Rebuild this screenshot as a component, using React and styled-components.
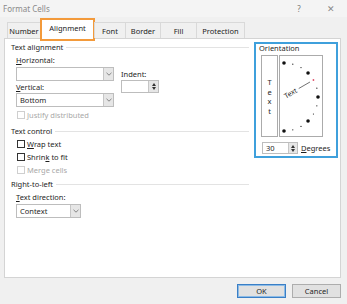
import React from "react";
import styled, { createGlobalStyle } from "styled-components";

const Global = createGlobalStyle`
  html, body { margin: 0; padding: 0; background: #f0f0f0; }
  * { box-sizing: border-box; }
`;

const Dialog = styled.div`
  width: 347px;
  height: 304px;
  background: #f0f0f0;
  display: flex;
  flex-direction: column;
  font-family: "Noto Sans", "Open Sans", sans-serif;
  font-size: 7.5px;
  color: #1e1e1e;
  overflow: hidden;
`;

const TitleBar = styled.div`
  height: 17px;
  display: flex;
  align-items: center;
  padding-left: 3px;
  background: #f4f4f4;
`;

const Title = styled.span`
  color: #8a8a8a;
  font-size: 8px;
  flex: 1;
`;

const TitleButton = styled.span`
  width: ${(p) => p.$w}px;
  margin-right: ${(p) => p.$mr}px;
  text-align: center;
  color: ${(p) => p.$color};
  font-size: ${(p) => p.$size}px;
`;

const TabRow = styled.div`
  height: 21px;
  display: flex;
  align-items: flex-end;
  padding-left: 7px;
  position: relative;
  z-index: 1;
`;

const Tab = styled.div`
  width: ${(p) => p.$w}px;
  height: ${(p) => (p.$active ? 23 : 16)}px;
  margin-bottom: ${(p) => (p.$active ? -3 : 0)}px;
  border: ${(p) => (p.$active ? "2px solid #f39a3b" : "1px solid #d9d9d9")};
  border-bottom: ${(p) => (p.$active ? "2px solid #f39a3b" : "none")};
  margin-left: ${(p) => (p.$first ? 0 : -1)}px;
  background: ${(p) => (p.$active ? "#ffffff" : "#f0f0f0")};
  display: flex;
  align-items: center;
  justify-content: center;
  padding-top: ${(p) => (p.$active ? 0 : 1)}px;
  padding-bottom: ${(p) => (p.$active ? 4 : 0)}px;
  color: #222;
`;

const Panel = styled.div`
  margin-left: 4px;
  width: 337px;
  height: 240px;
  background: #ffffff;
  border: 1px solid #d4d4d4;
  display: flex;
  align-items: flex-start;
`;

const LeftCol = styled.div`
  width: 244px;
  padding: 3px 0 0 6px;
  display: flex;
  flex-direction: column;
`;

const GroupTitle = styled.div`
  display: flex;
  align-items: center;
  gap: 3px;
  height: 10px;
  line-height: 10px;
  margin-top: ${(p) => p.$mt || 0}px;
  white-space: nowrap;
  &::after {
    content: "";
    flex: 1;
    height: 1px;
    background: #e3e3e3;
  }
`;

const FieldLabel = styled.div`
  height: 10px;
  line-height: 10px;
  margin-top: ${(p) => p.$mt || 0}px;
  white-space: nowrap;
`;

const U = styled.span`
  text-decoration: underline;
  text-underline-offset: 1px;
`;

const AlignRow = styled.div`
  display: flex;
  padding-left: 5px;
  margin-top: 3px;
`;

const FieldCol = styled.div`
  width: ${(p) => p.$w}px;
  display: flex;
  flex-direction: column;
  margin-left: ${(p) => p.$ml || 0}px;
  padding-top: ${(p) => p.$pt || 0}px;
`;

const Combo = styled.div`
  width: ${(p) => p.$w}px;
  height: 14px;
  margin-top: ${(p) => p.$mt || 0}px;
  border: 1px solid #bdbdbd;
  background: #fff;
  display: flex;
  align-items: center;
`;

const ComboText = styled.span`
  flex: 1;
  padding-left: 3px;
  line-height: 12px;
`;

const DropButton = styled.span`
  width: 10px;
  height: 100%;
  background: #e6e6e6;
  border-left: 1px solid #c6c6c6;
  display: flex;
  align-items: center;
  justify-content: center;
`;

const Spinner = styled.div`
  width: ${(p) => p.$w}px;
  height: ${(p) => p.$h}px;
  margin-top: ${(p) => p.$mt || 0}px;
  margin-left: ${(p) => p.$ml || 0}px;
  border: 1px solid #bdbdbd;
  background: #fff;
  display: flex;
  align-items: stretch;
  flex: none;
`;

const SpinText = styled.span`
  flex: 1;
  padding-left: 3px;
  display: flex;
  align-items: center;
`;

const SpinButton = styled.span`
  width: ${(p) => p.$w}px;
  background: #e6e6e6;
  border-left: 1px solid #c6c6c6;
  display: flex;
  flex-direction: column;
  align-items: center;
  justify-content: center;
  gap: 1px;
`;

const CheckRow = styled.div`
  display: flex;
  align-items: center;
  gap: 2px;
  height: 10px;
  padding-left: 6px;
  margin-top: ${(p) => p.$mt || 0}px;
  color: ${(p) => (p.$disabled ? "#a8a8a8" : "#1e1e1e")};
  white-space: nowrap;
`;

const Box = styled.span`
  width: 8px;
  height: 8px;
  border: 1px solid ${(p) => (p.$disabled ? "#cfcfcf" : "#333")};
  background: #fff;
  flex: none;
`;

const OrientBox = styled.div`
  margin: 3px 0 0 5px;
  width: 84px;
  height: 116px;
  border: 2px solid #3fa0dc;
  padding-left: 5px;
  display: flex;
  flex-direction: column;
`;

const OrientTitle = styled.div`
  height: 9px;
  line-height: 9px;
  margin-left: -2px;
  white-space: nowrap;
`;

const OrientRow = styled.div`
  display: flex;
  gap: 1px;
  margin-top: 2px;
`;

const StackBox = styled.div`
  width: 17px;
  height: 82px;
  border: 1px solid #ababab;
  display: flex;
  flex-direction: column;
  align-items: center;
  justify-content: center;
  font-size: 7.5px;
  line-height: 9.5px;
  padding-top: 2px;
`;

const DialBox = styled.div`
  width: 44px;
  height: 82px;
  border: 1px solid #ababab;
  display: flex;
`;

const DegRow = styled.div`
  display: flex;
  align-items: center;
  margin-top: 5px;
  gap: 3px;
`;

const Footer = styled.div`
  display: flex;
  justify-content: flex-end;
  gap: 6px;
  padding: 6px 6px 0 0;
`;

const Button = styled.div`
  width: 49px;
  height: 14px;
  border: 1px solid ${(p) => (p.$primary ? "#3a7fc6" : "#adadad")};
  box-shadow: ${(p) => (p.$primary ? "inset 0 0 0 1px #8cbbe6" : "none")};
  background: #e1e1e1;
  display: flex;
  align-items: center;
  justify-content: center;
`;

const Chevron = () => (
  <svg width="6" height="4" viewBox="0 0 6 4">
    <path d="M0.5 0.8 L3 3.2 L5.5 0.8" fill="none" stroke="#7a7a7a" strokeWidth="0.9" />
  </svg>
);

const Tri = ({ up }) => (
  <svg width="4" height="3" viewBox="0 0 4 3">
    <path d={up ? "M0 3 L2 0 L4 3 Z" : "M0 0 L2 3 L4 0 Z"} fill="#333" />
  </svg>
);

const Dial = () => {
  const cx = 4;
  const cy = 41;
  const R = 34;
  const dots = [];
  for (let a = -90; a <= 90; a += 15) {
    const rad = (a * Math.PI) / 180;
    const x = cx + R * Math.cos(rad);
    const y = cy - R * Math.sin(rad);
    const big = a % 45 === 0;
    const red = a === 30;
    dots.push(
      <circle
        key={a}
        cx={x}
        cy={y}
        r={big ? 1.8 : red ? 0.9 : 0.6}
        fill={red ? "#e0506a" : "#111"}
      />
    );
  }
  const r30 = (30 * Math.PI) / 180;
  return (
    <svg width="42" height="80" viewBox="0 0 42 80">
      {dots}
      <line
        x1={cx + 17 * Math.cos(r30)}
        y1={cy - 17 * Math.sin(r30)}
        x2={cx + 30 * Math.cos(r30)}
        y2={cy - 30 * Math.sin(r30)}
        stroke="#333"
        strokeWidth="0.7"
      />
      <text
        x={cx + 1}
        y={cy + 2.5}
        fontSize="7"
        fontFamily="Noto Sans, sans-serif"
        fill="#222"
        transform={`rotate(-30 ${cx} ${cy})`}
      >
        Text
      </text>
    </svg>
  );
};

const tabs = [
  { label: "Number", w: 34 },
  { label: "Alignment", w: 55, active: true },
  { label: "Font", w: 32 },
  { label: "Border", w: 36 },
  { label: "Fill", w: 37 },
  { label: "Protection", w: 49 },
];

export default function App() {
  return (
    <>
      <Global />
      <Dialog>
        <TitleBar>
          <Title>Format Cells</Title>
          <TitleButton $w={12} $mr={15} $color="#777" $size={8}>?</TitleButton>
          <TitleButton $w={22} $mr={5} $color="#888" $size={9}>✕</TitleButton>
        </TitleBar>
        <TabRow>
          {tabs.map((t, i) => (
            <Tab key={t.label} $w={t.w} $active={t.active} $first={i === 0}>
              {t.label}
            </Tab>
          ))}
        </TabRow>
        <Panel>
          <LeftCol>
            <GroupTitle>Text alignment</GroupTitle>
            <AlignRow>
              <FieldCol $w={98}>
                <FieldLabel>
                  <U>H</U>orizontal:
                </FieldLabel>
                <Combo $w={98} $mt={2}>
                  <ComboText />
                  <DropButton>
                    <Chevron />
                  </DropButton>
                </Combo>
                <FieldLabel $mt={1}>
                  <U>V</U>ertical:
                </FieldLabel>
                <Combo $w={98} $mt={1}>
                  <ComboText>Bottom</ComboText>
                  <DropButton>
                    <Chevron />
                  </DropButton>
                </Combo>
              </FieldCol>
              <FieldCol $w={38} $ml={7} $pt={14}>
                <FieldLabel>Indent:</FieldLabel>
                <Spinner $w={38} $h={13} $mt={1}>
                  <SpinText />
                  <SpinButton $w={10}>
                    <Tri up />
                    <Tri />
                  </SpinButton>
                </Spinner>
              </FieldCol>
            </AlignRow>
            <CheckRow $mt={3} $disabled>
              <Box $disabled />
              Justify distributed
            </CheckRow>
            <GroupTitle $mt={6}>Text control</GroupTitle>
            <CheckRow $mt={3}>
              <Box />
              <span>
                <U>W</U>rap text
              </span>
            </CheckRow>
            <CheckRow $mt={3}>
              <Box />
              <span>
                Shrin<U>k</U> to fit
              </span>
            </CheckRow>
            <CheckRow $mt={3} $disabled>
              <Box $disabled />
              Merge cells
            </CheckRow>
            <GroupTitle $mt={4}>Right-to-left</GroupTitle>
            <AlignRow>
              <FieldCol $w={65}>
                <FieldLabel>
                  <U>T</U>ext direction:
                </FieldLabel>
                <Combo $w={65} $mt={2}>
                  <ComboText>Context</ComboText>
                  <DropButton>
                    <Chevron />
                  </DropButton>
                </Combo>
              </FieldCol>
            </AlignRow>
          </LeftCol>
          <OrientBox>
            <OrientTitle>Orientation</OrientTitle>
            <OrientRow>
              <StackBox>
                <span>T</span>
                <span>e</span>
                <span>x</span>
                <span>t</span>
              </StackBox>
              <DialBox>
                <Dial />
              </DialBox>
            </OrientRow>
            <DegRow>
              <Spinner $w={36} $h={12} $ml={1}>
                <SpinText>30</SpinText>
                <SpinButton $w={9}>
                  <Tri up />
                  <Tri />
                </SpinButton>
              </Spinner>
              <span>
                <U>D</U>egrees
              </span>
            </DegRow>
          </OrientBox>
        </Panel>
        <Footer>
          <Button $primary>OK</Button>
          <Button>Cancel</Button>
        </Footer>
      </Dialog>
    </>
  );
}
